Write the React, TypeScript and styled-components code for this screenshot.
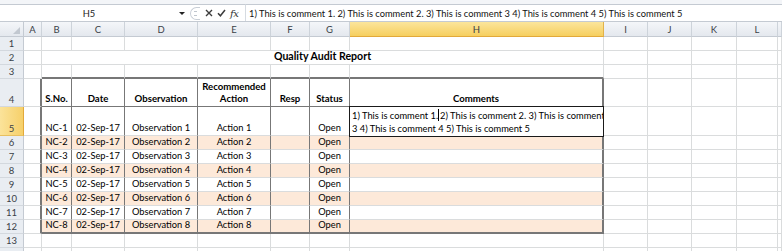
import React from "react";
import styled, { createGlobalStyle } from "styled-components";

const GlobalStyle = createGlobalStyle`
  html, body { margin: 0; padding: 0; background: #ffffff; overflow: hidden; }
  body { font-family: Lato, "Liberation Sans", sans-serif; }
  * { box-sizing: border-box; }
`;

const GRID = "#dadcdd";
const DARK = "#777777";
const PEACH = "#fde9d9";

const cols = [
  { key: "A", w: 18 },
  { key: "B", w: 30 },
  { key: "C", w: 53 },
  { key: "D", w: 73 },
  { key: "E", w: 73 },
  { key: "F", w: 39 },
  { key: "G", w: 40 },
  { key: "H", w: 254 },
  { key: "I", w: 44 },
  { key: "J", w: 44 },
  { key: "K", w: 45 },
  { key: "L", w: 41 },
  { key: "M", w: 0 },
];

const rowHeights: Record<number, number> = { 4: 28, 5: 29 };
const rowNums = Array.from({ length: 14 }, (_, i) => i + 1);

const Page = styled.div`
  width: 782px;
  height: 251px;
  overflow: hidden;
  background: #fff;
`;

const FormulaBar = styled.div`
  display: flex;
  height: 22px;
  padding-top: 4px;
  background: #f3f5f8;
  border-bottom: 1px solid #c4cad2;
`;

const NameBox = styled.div`
  position: relative;
  width: 188px;
  height: 17px;
  background: #fff;
  border-top: 1px solid #c4cad2;
  display: flex;
  align-items: center;
  justify-content: center;
  font-size: 9.3px;
  color: #222;
  padding-right: 10px;
`;

const DropArrow = styled.span`
  position: absolute;
  right: 3px;
  top: 7px;
  width: 0;
  height: 0;
  border-left: 3px solid transparent;
  border-right: 3px solid transparent;
  border-top: 3px solid #222;
`;

const FxGroup = styled.div`
  width: 57px;
  height: 17px;
  background: #fff;
  border-top: 1px solid #c4cad2;
  display: flex;
  align-items: center;
  padding-left: 2px;
`;

const Pill = styled.span`
  width: 10px;
  height: 13px;
  border: 1px solid #c8ced6;
  border-right: none;
  border-radius: 7px 0 0 7px;
  display: flex;
  align-items: center;
  justify-content: center;
  margin-right: 5px;
  &::after {
    content: "";
    width: 3px;
    height: 3px;
    border-top: 1px solid #c0c6ce;
    border-bottom: 1px solid #c0c6ce;
  }
`;

const IconSlot = styled.span<{ $mr: number }>`
  display: flex;
  align-items: center;
  margin-right: ${(p) => p.$mr}px;
`;

const Fx = styled.span`
  font-family: "DejaVu Serif", "Liberation Serif", serif;
  font-style: italic;
  font-size: 10px;
  color: #333;
  letter-spacing: -0.5px;
`;

const FormulaText = styled.div`
  flex: 1;
  height: 17px;
  background: #fff;
  border-top: 1px solid #c4cad2;
  border-left: 1px solid #d6dbe1;
  font-size: 9.3px;
  color: #111;
  display: flex;
  align-items: center;
  padding-left: 3px;
  white-space: nowrap;
  overflow: hidden;
`;

const Sheet = styled.div<{ $cols: string; $rows: string }>`
  display: grid;
  grid-template-columns: ${(p) => p.$cols};
  grid-template-rows: ${(p) => p.$rows};
`;

const Corner = styled.div`
  position: relative;
  background: linear-gradient(#f4f6f9, #e4e8ee);
  border-right: 1px solid #c4cad2;
  border-bottom: 1px solid #c4cad2;
  &::after {
    content: "";
    position: absolute;
    right: 3px;
    bottom: 2px;
    width: 0;
    height: 0;
    border-left: 7px solid transparent;
    border-bottom: 7px solid #c2c8d0;
  }
`;

const ColHead = styled.div<{ $sel?: boolean }>`
  background: ${(p) =>
    p.$sel ? "linear-gradient(#fbe59c, #f6cf5f)" : "linear-gradient(#f4f6f9, #e4e8ee)"};
  border-right: 1px solid ${(p) => (p.$sel ? "#e2b24a" : "#cdd3da")};
  border-bottom: 1px solid ${(p) => (p.$sel ? "#e2a93a" : "#c4cad2")};
  font-size: 9.5px;
  color: #3a3f47;
  display: flex;
  align-items: center;
  justify-content: center;
`;

const RowHead = styled.div<{ $sel?: boolean }>`
  background: ${(p) =>
    p.$sel ? "linear-gradient(90deg, #fbe39a, #f6d06a)" : "#e9edf2"};
  border-right: 1px solid ${(p) => (p.$sel ? "#e2a93a" : "#c4cad2")};
  border-bottom: 1px solid ${(p) => (p.$sel ? "#e8c060" : "#d3d8de")};
  font-size: 9.5px;
  color: #3a3f47;
  display: flex;
  align-items: flex-end;
  justify-content: center;
  padding-bottom: 1px;
`;

const Cell = styled.div<{
  $bg?: string;
  $rb: string;
  $bb: string;
  $bold?: boolean;
  $span?: number;
}>`
  position: relative;
  background: ${(p) => p.$bg || "#fff"};
  border-right: ${(p) => p.$rb};
  border-bottom: ${(p) => p.$bb};
  font-size: ${(p) => (p.$bold ? "9.6px" : "9.3px")};
  font-weight: ${(p) => (p.$bold ? 700 : 400)};
  color: #000;
  display: flex;
  flex-direction: column;
  align-items: center;
  justify-content: flex-end;
  text-align: center;
  line-height: 12px;
  padding-bottom: 1px;
  white-space: nowrap;
  grid-column: ${(p) => (p.$span ? `span ${p.$span}` : "auto")};
`;

const Title = styled.span`
  font-size: 10.6px;
  font-weight: 700;
  line-height: 13px;
`;

const Editor = styled.div`
  position: absolute;
  left: -1px;
  top: -1px;
  right: -2px;
  bottom: -2px;
  background: #fff;
  border: 1px solid #1a1a1a;
  padding: 2px 0 0 2px;
  font-size: 9.3px;
  line-height: 13px;
  text-align: left;
  white-space: nowrap;
  overflow: hidden;
  z-index: 2;
`;

const EditLine = styled.div`
  display: block;
`;

const Caret = styled.span`
  display: inline-block;
  width: 1px;
  height: 12px;
  background: #000;
  vertical-align: -2px;
  margin: 0 1px 0 0;
`;

const XIcon = () => (
  <svg width="8" height="8" viewBox="0 0 8 8">
    <path d="M1 1 L7 7 M7 1 L1 7" stroke="#3c3c3c" strokeWidth="1.4" fill="none" />
  </svg>
);

const CheckIcon = () => (
  <svg width="9" height="8" viewBox="0 0 9 8">
    <path d="M1 4.2 L3.4 6.8 L8 1" stroke="#3c3c3c" strokeWidth="1.5" fill="none" />
  </svg>
);

type CellData = { text?: React.ReactNode; bold?: boolean };

function tableContent(r: number, c: string): CellData {
  if (r === 4) {
    const h: Record<string, React.ReactNode> = {
      B: "S.No.",
      C: "Date",
      D: "Observation",
      E: (
        <>
          <span>Recommended</span>
          <span>Action</span>
        </>
      ),
      F: "Resp",
      G: "Status",
      H: "Comments",
    };
    return { text: h[c], bold: true };
  }
  if (r >= 5 && r <= 12) {
    const i = r - 4;
    const d: Record<string, string> = {
      B: `NC-${i}`,
      C: "02-Sep-17",
      D: `Observation ${i}`,
      E: `Action ${i}`,
      F: "",
      G: "Open",
      H: "",
    };
    return { text: d[c] };
  }
  return {};
}

const inTableCols = ["B", "C", "D", "E", "F", "G", "H"];

export default function App() {
  const colTemplate = `24px ${cols
    .map((c) => (c.w ? `${c.w}px` : "1fr"))
    .join(" ")}`;
  const rowTemplate = `15px ${rowNums.map((r) => `${rowHeights[r] || 14}px`).join(" ")}`;

  const cells: React.ReactNode[] = [];
  cells.push(<Corner key="corner" />);
  cols.forEach((c) =>
    cells.push(
      <ColHead key={`h-${c.key}`} $sel={c.key === "H"}>
        {c.key === "M" ? "" : c.key}
      </ColHead>
    )
  );

  rowNums.forEach((r) => {
    cells.push(
      <RowHead key={`r-${r}`} $sel={r === 5}>
        {r <= 13 ? r : ""}
      </RowHead>
    );
    const inRows = r >= 4 && r <= 12;
    for (let ci = 0; ci < cols.length; ci++) {
      const c = cols[ci].key;
      if (r === 2 && c === "B") {
        cells.push(
          <Cell key={`${r}-${c}`} $span={7} $rb={`1px solid ${GRID}`} $bb={`1px solid ${GRID}`}>
            <Title>Quality Audit Report</Title>
          </Cell>
        );
        ci += 6;
        continue;
      }
      const inCols = inTableCols.includes(c);
      let rb = `1px solid ${GRID}`;
      let bb = `1px solid ${GRID}`;
      if (inRows && c === "A") rb = `2px solid ${DARK}`;
      if (inRows && inCols) rb = c === "H" ? `2px solid ${DARK}` : `1px solid ${DARK}`;
      if (r === 3 && inCols) bb = `2px solid ${DARK}`;
      if (r === 4 && inCols) bb = `1px solid ${DARK}`;
      if (r === 12 && inCols) bb = `2px solid ${DARK}`;
      const bg = inCols && r >= 6 && r <= 12 && r % 2 === 0 ? PEACH : undefined;
      const data = inRows && inCols ? tableContent(r, c) : {};
      const editing = r === 5 && c === "H";
      cells.push(
        <Cell key={`${r}-${c}`} $rb={rb} $bb={bb} $bg={bg} $bold={data.bold}>
          {data.text}
          {editing && (
            <Editor>
              <EditLine>
                1) This is comment 1.
                <Caret />
                2) This is comment 2. 3) This is comment
              </EditLine>
              <EditLine>3 4) This is comment 4 5) This is comment 5</EditLine>
            </Editor>
          )}
        </Cell>
      );
    }
  });

  return (
    <Page>
      <GlobalStyle />
      <FormulaBar>
        <NameBox>
          H5
          <DropArrow />
        </NameBox>
        <FxGroup>
          <Pill />
          <IconSlot $mr={4}>
            <XIcon />
          </IconSlot>
          <IconSlot $mr={4}>
            <CheckIcon />
          </IconSlot>
          <Fx>fx</Fx>
        </FxGroup>
        <FormulaText>
          1) This is comment 1. 2) This is comment 2. 3) This is comment 3 4) This is comment 4 5) This is comment 5
        </FormulaText>
      </FormulaBar>
      <Sheet $cols={colTemplate} $rows={rowTemplate}>
        {cells}
      </Sheet>
    </Page>
  );
}
